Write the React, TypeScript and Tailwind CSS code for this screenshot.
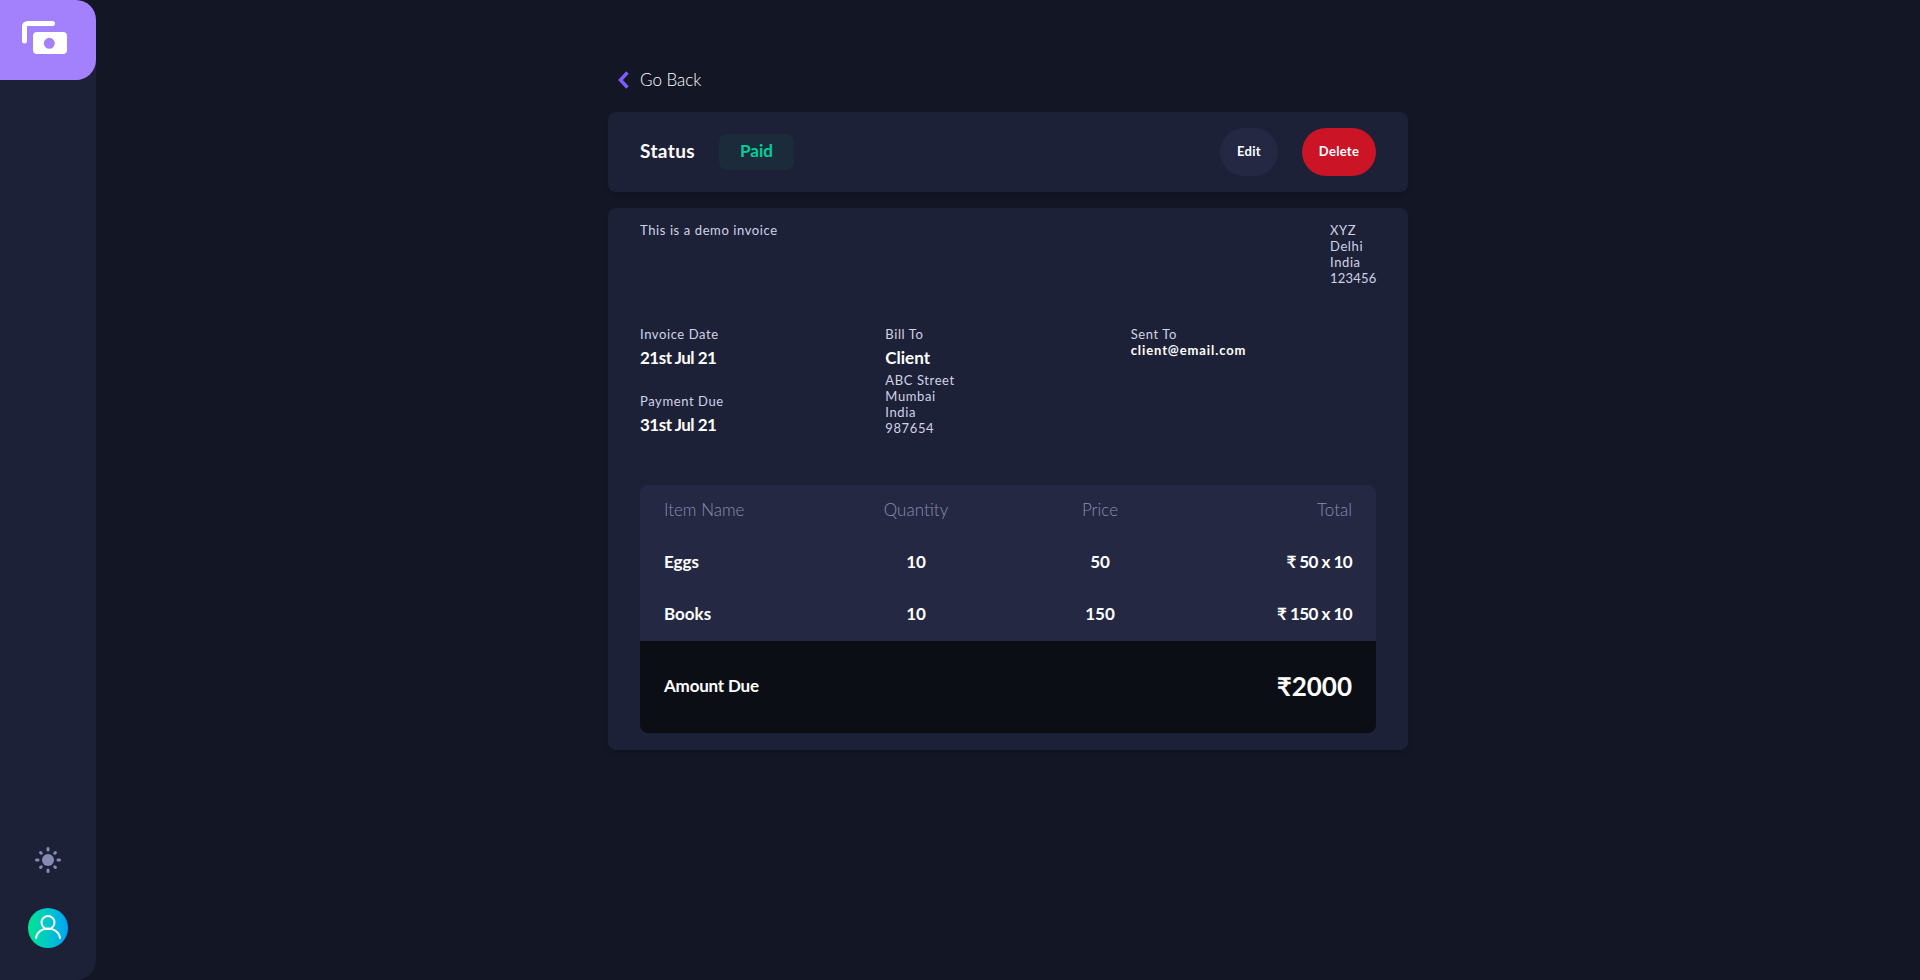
import React from 'react';

const items = [
    { name: 'Eggs', quantity: 10, price: 50 },
    { name: 'Books', quantity: 10, price: 150 },
];

const Sidebar = () => (
    <aside className="w-24 shrink-0 h-full bg-[#1d2138] rounded-r-[20px] flex flex-col justify-between">
        <div className="h-20 bg-[#a380fc] rounded-r-[20px]">
            <svg width="96" height="80" viewBox="0 0 96 80" fill="none">
                <path d="M24.500 41V26.500a3 3 0 0 1 3-3H52.500" stroke="#fff" strokeWidth="5" strokeLinecap="round" />
                <path fillRule="evenodd" clipRule="evenodd" d="M37 32h26a4 4 0 0 1 4 4v14a4 4 0 0 1-4 4H37a4 4 0 0 1-4-4V36a4 4 0 0 1 4-4Zm12.300 5.800a5.500 5.500 0 1 0 0 11 5.500 5.500 0 0 0 0-11Z" fill="#fff" />
            </svg>
        </div>
        <div className="flex flex-col items-center gap-[35px] pb-8">
            <svg width="26" height="26" viewBox="0 0 26 26" fill="#858bb2">
                <circle cx="13" cy="13" r="6" />
                <rect x="11.500" y="0" width="3" height="4.500" rx="1.500" />
                <rect x="11.500" y="21.500" width="3" height="4.500" rx="1.500" />
                <rect x="0" y="11.500" width="4.500" height="3" rx="1.500" />
                <rect x="21.500" y="11.500" width="4.500" height="3" rx="1.500" />
                <rect x="11.500" y="1" width="3" height="4" rx="1.500" transform="rotate(45 13 13)" />
                <rect x="11.500" y="21" width="3" height="4" rx="1.500" transform="rotate(45 13 13)" />
                <rect x="11.500" y="1" width="3" height="4" rx="1.500" transform="rotate(-45 13 13)" />
                <rect x="11.500" y="21" width="3" height="4" rx="1.500" transform="rotate(-45 13 13)" />
            </svg>
            <div className="w-10 h-10 rounded-full bg-gradient-to-r from-[#00e58f] to-[#00a3f5]">
                <svg width="40" height="40" viewBox="0 0 40 40" fill="none" stroke="#fff" strokeWidth="2">
                    <circle cx="20" cy="14.500" r="6.500" />
                    <path d="M8 30c1-6 6-9.500 12-9.500s11 3.500 12 9.500" strokeLinecap="round" />
                </svg>
            </div>
        </div>
    </aside>
);

const Label = ({ children }: { children: React.ReactNode }) => (
    <p className="text-[13px] leading-4 tracking-[0.6px] text-[#d0d3e6]">{children}</p>
);

const Strong = ({ children }: { children: React.ReactNode }) => (
    <p className="text-[17px] leading-6 font-bold tracking-[-0.5px] text-white">{children}</p>
);

export default function App() {
    return (
        <div className="h-[980px] w-full flex bg-[#131625] overflow-hidden" style={{ fontFamily: '"Lato", "Noto Sans", sans-serif' }}>
            <Sidebar />
            <main className="flex-1 flex justify-center pt-[68px]">
                <div className="w-[800px]">
                    <div className="h-6 flex items-center gap-[11px] pl-[10px] mb-[20px]">
                        <svg width="11" height="18" viewBox="0 0 11 18" fill="none">
                            <path d="M9.500 1.500 2.500 9l7 7.500" stroke="#7c5dfa" strokeWidth="3.500" />
                        </svg>
                        <span className="text-[17px] font-light text-white">Go Back</span>
                    </div>

                    <div className="h-20 rounded-lg bg-[#1d2138] px-8 flex items-center justify-between shadow-md">
                        <div className="flex items-center gap-[24px]">
                            <span className="w-[55px] pb-[2px] text-[19px] font-bold tracking-[0.4px] text-white">Status</span>
                            <span className="w-[75px] h-9 pb-[3px] rounded-lg bg-[#1c2b3a] text-[#00d09c] text-[17px] font-bold flex items-center justify-center">Paid</span>
                        </div>
                        <div className="flex items-center gap-6">
                            <button className="w-[58px] h-12 rounded-3xl bg-[#242843] text-white text-[13px] font-bold tracking-[0.3px]">Edit</button>
                            <button className="w-[74px] h-12 rounded-3xl bg-[#cb1426] text-white text-[13px] font-bold tracking-[0.3px]">Delete</button>
                        </div>
                    </div>

                    <div className="mt-4 h-[542px] rounded-lg bg-[#1d2138] px-8 pt-[14px] shadow-md">
                        <div className="flex justify-between">
                            <Label>This is a demo invoice</Label>
                            <div className="w-[46px] shrink-0 whitespace-nowrap">
                                <Label>XYZ</Label>
                                <Label>Delhi</Label>
                                <Label>India</Label>
                                <p className="text-[13px] leading-4 tracking-[0.2px] text-[#d0d3e6]">123456</p>
                            </div>
                        </div>

                        <div className="mt-10 grid grid-cols-3">
                            <div>
                                <Label>Invoice Date</Label>
                                <div className="mt-1"><Strong>21st Jul 21</Strong></div>
                                <div className="mt-[23px]"><Label>Payment Due</Label></div>
                                <div className="mt-1"><Strong>31st Jul 21</Strong></div>
                            </div>
                            <div>
                                <Label>Bill To</Label>
                                <div className="mt-1">
                                    <p className="text-[17px] leading-6 font-bold text-white">Client</p>
                                </div>
                                <div className="mt-[2px]">
                                    <Label>ABC Street</Label>
                                    <Label>Mumbai</Label>
                                    <Label>India</Label>
                                    <Label>987654</Label>
                                </div>
                            </div>
                            <div>
                                <Label>Sent To</Label>
                                <p className="text-[13px] leading-4 tracking-[0.9px] font-bold text-white">client@email.com</p>
                            </div>
                        </div>

                        <div className="mt-[48px] rounded-lg overflow-hidden">
                            <div className="bg-[#242843] px-6">
                                <div className="grid grid-cols-[172px_160px_208px_1fr] h-[52px] pb-[3px] items-center text-[17px] font-light text-[#888eb0]">
                                    <span>Item Name</span>
                                    <span className="text-center">Quantity</span>
                                    <span className="text-center">Price</span>
                                    <span className="text-right">Total</span>
                                </div>
                                {items.map((item) => (
                                    <div key={item.name} className="grid grid-cols-[172px_160px_208px_1fr] h-[52px] pb-[3px] items-center text-[17px] font-bold text-white">
                                        <span>{item.name}</span>
                                        <span className="text-center">{item.quantity}</span>
                                        <span className="text-center">{item.price}</span>
                                        <span className="text-right tracking-[-0.55px]">₹ {item.price} x {item.quantity}</span>
                                    </div>
                                ))}
                            </div>
                            <div className="h-[92px] pb-[2px] bg-[#0c0e16] px-6 flex items-center justify-between text-white font-bold">
                                <span className="text-[17px] tracking-[-0.2px]">Amount Due</span>
                                <span className="text-[26px]">₹2000</span>
                            </div>
                        </div>
                    </div>
                </div>
            </main>
        </div>
    );
}
